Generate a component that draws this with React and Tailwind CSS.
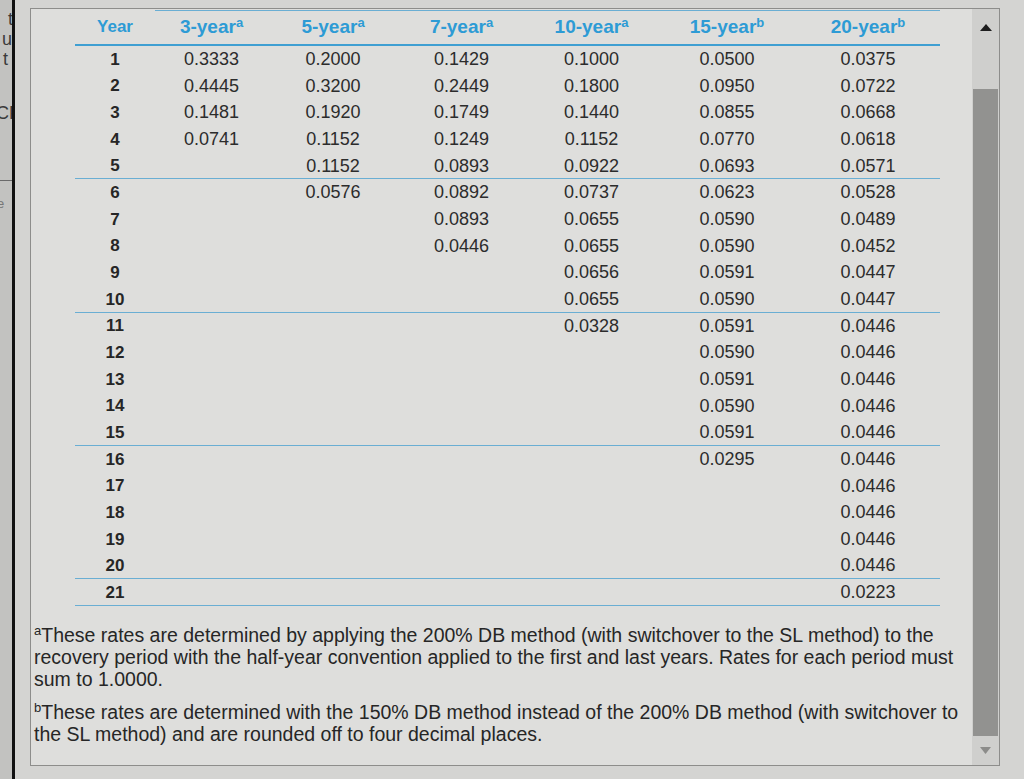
import React from "react";

const cols = [
  { label: "3-year", note: "a", values: ["0.3333", "0.4445", "0.1481", "0.0741"] },
  { label: "5-year", note: "a", values: ["0.2000", "0.3200", "0.1920", "0.1152", "0.1152", "0.0576"] },
  { label: "7-year", note: "a", values: ["0.1429", "0.2449", "0.1749", "0.1249", "0.0893", "0.0892", "0.0893", "0.0446"] },
  {
    label: "10-year",
    note: "a",
    values: ["0.1000", "0.1800", "0.1440", "0.1152", "0.0922", "0.0737", "0.0655", "0.0655", "0.0656", "0.0655", "0.0328"],
  },
  {
    label: "15-year",
    note: "b",
    values: [
      "0.0500", "0.0950", "0.0855", "0.0770", "0.0693", "0.0623", "0.0590", "0.0590",
      "0.0591", "0.0590", "0.0591", "0.0590", "0.0591", "0.0590", "0.0591", "0.0295",
    ],
  },
  {
    label: "20-year",
    note: "b",
    values: [
      "0.0375", "0.0722", "0.0668", "0.0618", "0.0571", "0.0528", "0.0489", "0.0452",
      "0.0447", "0.0447", "0.0446", "0.0446", "0.0446", "0.0446", "0.0446", "0.0446",
      "0.0446", "0.0446", "0.0446", "0.0446", "0.0223",
    ],
  },
];

const years = Array.from({ length: 21 }, (_, i) => i + 1);
const grid = "grid w-[865px] grid-cols-[80px_113px_130px_127px_133px_138px_144px]";

const LeftStrip = () => (
  <div className="w-[12px] shrink-0 overflow-hidden bg-[#c2c2c0] text-[18px] leading-none text-[#3a3a3a]">
    <div className="mt-[10px] pl-[8px]">t</div>
    <div className="mt-[2px] pl-[2px]">u</div>
    <div className="mt-[2px] pl-[3px]">t</div>
    <div className="mt-[36px] -ml-[4px] whitespace-nowrap">CF</div>
    <div className="mt-[58px] h-px bg-[#6a6a6a]" />
    <div className="mt-[16px] -ml-[3px] text-[13px] text-[#777]">e</div>
  </div>
);

const Scrollbar = () => (
  <div className="flex w-[27px] shrink-0 flex-col bg-[#cfcfcd]">
    <div className="flex h-[22px] items-end justify-center">
      <svg width="12" height="7" viewBox="0 0 12 7">
        <polygon points="6,0 12,7 0,7" fill="#1d1d1d" />
      </svg>
    </div>
    <div className="h-[58px]" />
    <div className="mx-[1px] h-[647px] bg-[#929290]" />
    <div className="flex flex-1 items-center justify-center">
      <svg width="11" height="7" viewBox="0 0 11 7">
        <polygon points="0,0 11,0 5.5,7" fill="#8c8c8a" />
      </svg>
    </div>
  </div>
);

export default function App() {
  return (
    <div className="flex h-[779px] w-[1024px] overflow-hidden bg-[#d4d4d2] font-['Liberation_Sans',Arial,sans-serif]">
      <LeftStrip />
      <div className="w-[3px] shrink-0 bg-[#111]" />
      <div className="flex-1 pl-[15px] pt-[8px]">
        <div className="flex h-[758px] w-[970px] border border-[#8d8d8b] bg-[#dededc]">
          <div className="flex-1 pt-px">
            <div className="pl-[44px]">
              <div className={`${grid} h-[36px] border-b-2 border-[#3f9fd2] text-[19px] font-bold text-[#2d9bd5]`}>
                <div className="flex items-center justify-center text-[17px]">Year</div>
                {cols.map((c) => (
                  <div key={c.label} className="flex items-center justify-center border-t border-[#6aaed3]">
                    <span>
                      {c.label}
                      <sup className="text-[13px] font-bold">{c.note}</sup>
                    </span>
                  </div>
                ))}
              </div>
              {years.map((y) => (
                <div
                  key={y}
                  className={`${grid} h-[26.67px] items-center text-[18px] text-[#2c2c2c] ${
                    y % 5 === 0 || y === 21 ? "border-b border-[#6aaed3]" : ""
                  }`}
                >
                  <div className="text-center text-[17px] font-bold text-[#262626]">{y}</div>
                  {cols.map((c) => (
                    <div key={c.label} className="text-center">
                      {c.values[y - 1] || ""}
                    </div>
                  ))}
                </div>
              ))}
            </div>
            <div className="mt-[18px] pl-[3px] text-[19.5px] leading-[22px] text-[#262626]">
              <p className="mb-[11px] whitespace-nowrap">
                <sup className="text-[13px]">a</sup>These rates are determined by applying the 200% DB method (with switchover to the SL method) to the
                <br />
                recovery period with the half-year convention applied to the first and last years. Rates for each period must
                <br />
                sum to 1.0000.
              </p>
              <p className="whitespace-nowrap">
                <sup className="text-[13px]">b</sup>These rates are determined with the 150% DB method instead of the 200% DB method (with switchover to
                <br />
                the SL method) and are rounded off to four decimal places.
              </p>
            </div>
          </div>
          <Scrollbar />
        </div>
      </div>
    </div>
  );
}
